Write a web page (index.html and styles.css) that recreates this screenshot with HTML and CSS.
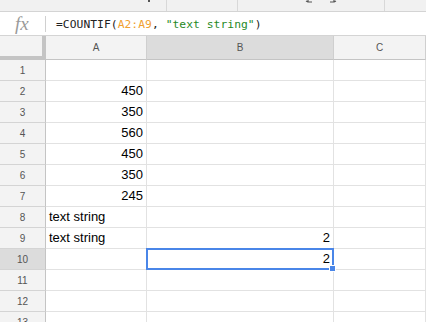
FILE: index.html
```html
<!DOCTYPE html>
<html lang="en">
<head>
  <meta charset="UTF-8" />
  <title>COUNTIF</title>
  <link rel="stylesheet" href="styles.css">
</head>
<body>
  <div class="toolbar">
    <div class="tb-group g1"><span class="tick"></span></div>
    <div class="tb-group g2"></div>
    <div class="tb-group g3">
      <svg class="arrows" width="40" height="4" viewBox="0 0 40 4">
        <path d="M5 0 V2 H9 M3 1 L5 2" stroke="#555" stroke-width="1.2" fill="none"/>
        <path d="M31 0 V2 H27 M33 1 L31 2" stroke="#555" stroke-width="1.2" fill="none"/>
      </svg>
    </div>
    <div class="tb-group g4"></div>
  </div>

  <div class="formula-bar">
    <div class="fx">fx</div>
    <div class="formula">=COUNTIF(<span class="ref">A2:A9</span>, <span class="str">"text string"</span>)</div>
  </div>

  <div class="sheet">
    <div class="corner"></div>
    <div class="col-head">A</div>
    <div class="col-head active">B</div>
    <div class="col-head">C</div>

    <div class="row-head">1</div><div class="cell"></div><div class="cell"></div><div class="cell"></div>
    <div class="row-head">2</div><div class="cell num">450</div><div class="cell"></div><div class="cell"></div>
    <div class="row-head">3</div><div class="cell num">350</div><div class="cell"></div><div class="cell"></div>
    <div class="row-head">4</div><div class="cell num">560</div><div class="cell"></div><div class="cell"></div>
    <div class="row-head">5</div><div class="cell num">450</div><div class="cell"></div><div class="cell"></div>
    <div class="row-head">6</div><div class="cell num">350</div><div class="cell"></div><div class="cell"></div>
    <div class="row-head">7</div><div class="cell num">245</div><div class="cell"></div><div class="cell"></div>
    <div class="row-head">8</div><div class="cell">text string</div><div class="cell"></div><div class="cell"></div>
    <div class="row-head">9</div><div class="cell">text string</div><div class="cell num">2</div><div class="cell"></div>
    <div class="row-head active">10</div><div class="cell"></div><div class="cell num selected">2<span class="handle"></span></div><div class="cell"></div>
    <div class="row-head">11</div><div class="cell"></div><div class="cell"></div><div class="cell"></div>
    <div class="row-head">12</div><div class="cell"></div><div class="cell"></div><div class="cell"></div>
    <div class="row-head">13</div><div class="cell"></div><div class="cell"></div><div class="cell"></div>
  </div>
</body>
</html>
```

FILE: styles.css
```css
* {
  box-sizing: border-box;
}

body {
  margin: 0;
  font-family: "Liberation Sans", Arial, sans-serif;
  color: #222;
  background: #fff;
  overflow: hidden;
}

/* toolbar strip, cut off at the top */
.toolbar {
  display: flex;
  height: 12px;
  background: #f1f1f1;
  border-bottom: 1px solid #d4d4d4;
}

.tb-group {
  height: 11px;
  border-right: 1px solid #d8d8d8;
  position: relative;
}

.g1 { width: 167px; }
.g2 { width: 71px; }
.g3 { width: 147px; }
.g4 { flex: 1; border-right: none; }

.tick {
  position: absolute;
  left: 148px;
  top: 0;
  width: 2px;
  height: 2px;
  background: #555;
}

.arrows {
  position: absolute;
  left: 65px;
  top: 0;
}

.formula-bar {
  display: flex;
  align-items: center;
  height: 24px;
  border-bottom: 1px solid #d4d4d4;
  background: #fff;
}

.fx {
  width: 46px;
  height: 16px;
  line-height: 15px;
  padding-left: 15px;
  border-right: 1px solid #d0d0d0;
  font-family: "Liberation Serif", "Times New Roman", serif;
  font-style: italic;
  font-size: 19px;
  color: #9a9a9a;
}

.formula {
  padding-left: 10px;
  padding-top: 1px;
  font-family: "DejaVu Sans Mono", monospace;
  font-size: 11.3px;
  color: #222;
  letter-spacing: 0.05px;
}

.ref { color: #f0a030; }
.str { color: #1f8a1f; }

.sheet {
  display: grid;
  grid-template-columns: 46px 101px 187px 1fr;
  grid-template-rows: 24px repeat(13, 21px);
}

.corner {
  background: #f3f3f3;
  border-right: 4px solid #c4c4c4;
  border-bottom: 4px solid #c4c4c4;
}

.col-head {
  display: flex;
  align-items: center;
  justify-content: center;
  background: #f3f3f3;
  border-right: 1px solid #cfcfcf;
  border-bottom: 1px solid #c4c4c4;
  font-size: 10px;
  color: #555;
}

.col-head.active,
.row-head.active {
  background: #dcdcdc;
}

.row-head {
  display: flex;
  align-items: center;
  justify-content: center;
  background: #f3f3f3;
  border-right: 1px solid #c4c4c4;
  border-bottom: 1px solid #d4d4d4;
  font-size: 10px;
  color: #555;
}

.cell {
  position: relative;
  padding: 0 3px;
  border-right: 1px solid #e2e2e2;
  border-bottom: 1px solid #e2e2e2;
  font-size: 13px;
  line-height: 20px;
  color: #000;
  white-space: nowrap;
}

.cell.num {
  text-align: right;
}

.selected::after {
  content: "";
  position: absolute;
  left: -1px;
  top: -1px;
  right: -1px;
  bottom: -1px;
  border: 2px solid #4a86e8;
}

.handle {
  position: absolute;
  right: -3px;
  bottom: -3px;
  width: 7px;
  height: 7px;
  background: #4a86e8;
  border: 1px solid #fff;
  z-index: 1;
}
```
